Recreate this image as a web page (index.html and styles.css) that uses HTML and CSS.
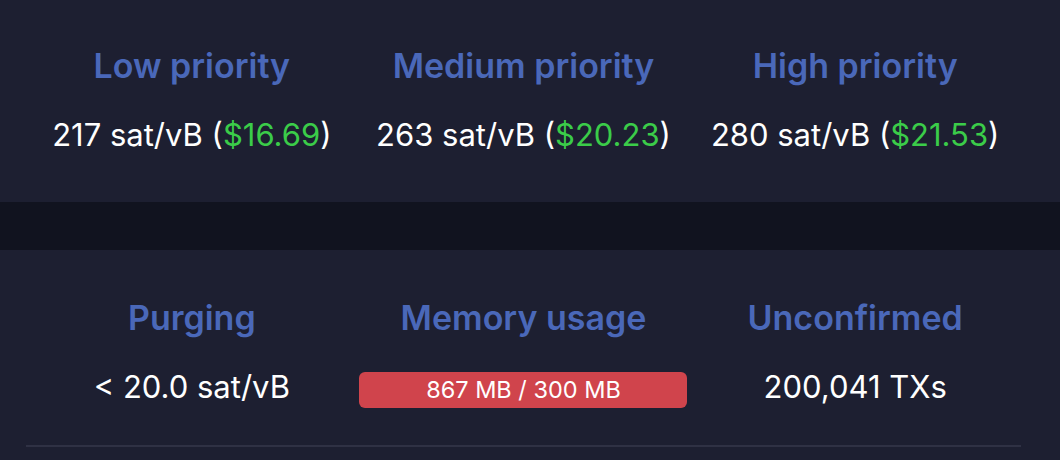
FILE: index.html
```html
<!DOCTYPE html>
<html>
<head>
    <link rel="stylesheet" href="styles.css">
</head>
<body>
    <div class="fees card">
        <div class="stats">
            <div class="item">
                <h5 class="title">Low priority</h5>
                <p class="value">217 sat/vB (<span class="fiat">$16.69</span>)</p>
            </div>
            <div class="item">
                <h5 class="title">Medium priority</h5>
                <p class="value">263 sat/vB (<span class="fiat">$20.23</span>)</p>
            </div>
            <div class="item">
                <h5 class="title">High priority</h5>
                <p class="value">280 sat/vB (<span class="fiat">$21.53</span>)</p>
            </div>
        </div>
    </div>
    <div class="gap"></div>
    <div class="mempool card">
        <div class="stats">
            <div class="item">
                <h5 class="title">Purging</h5>
                <p class="value">&lt; 20.0 sat/vB</p>
            </div>
            <div class="item">
                <h5 class="title">Memory usage</h5>
                <div class="bar">867 MB / 300 MB</div>
            </div>
            <div class="item">
                <h5 class="title">Unconfirmed</h5>
                <p class="value">200,041 TXs</p>
            </div>
        </div>
        <hr class="divider">
    </div>
</body>
</html>
```

FILE: styles.css
```css
body {
    margin: 0;
    background-color: #1d1f31;
    font-family: Inter, "Noto Sans", sans-serif;
    color: #fff;
}
.card {
    background-color: #1d1f31;
    padding: 0 39px 0 26px;
}
.fees {
    height: 202px;
    padding-top: 46px;
    box-sizing: border-box;
}
.mempool {
    padding-top: 48px;
}
.gap {
    height: 48px;
    background-color: #11131f;
}
.stats {
    display: grid;
    grid-template-columns: repeat(3, 1fr);
}
.item {
    display: flex;
    flex-direction: column;
    align-items: center;
}
.title {
    margin: 0;
    font-size: 34px;
    line-height: 40px;
    font-weight: 600;
    color: #4a68b9;
}
.value {
    margin: 30px 0 0;
    font-size: 31px;
    line-height: 37px;
    white-space: nowrap;
}
.fiat {
    color: #3bcc49;
}
.bar {
    margin-top: 34px;
    width: 328px;
    height: 36px;
    line-height: 36px;
    border-radius: 6px;
    background-color: #d0444c;
    text-align: center;
    font-size: 23.5px;
}
.divider {
    margin: 37px 0 0;
    border: none;
    height: 2px;
    background-color: #2f3144;
}
```
